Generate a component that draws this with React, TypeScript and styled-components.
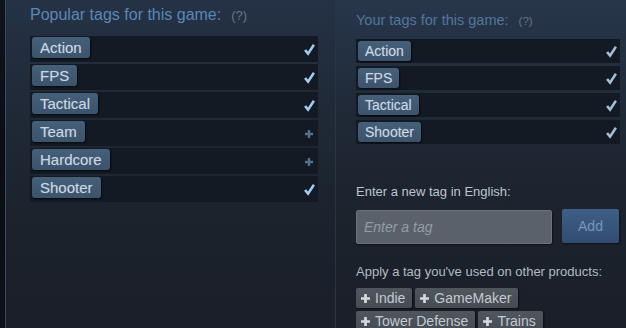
import React from "react";
import styled, { createGlobalStyle } from "styled-components";

const Global = createGlobalStyle`
  html, body { margin: 0; padding: 0; background: #0b0e13; }
  body { font-family: "Liberation Sans", Arial, sans-serif; }
`;

const Frame = styled.div`
  width: 626px;
  height: 328px;
  display: flex;
  overflow: hidden;
  background: #0b0e13;
`;

const Gutter = styled.div`
  flex: none;
  width: 5px;
  background: linear-gradient(180deg, #10141b 0%, #0a0d12 50%, #0d1016 100%);
`;

const Modal = styled.div`
  flex: 1;
  display: grid;
  grid-template-columns: 330px 1fr;
  border-left: 1px solid #364a61;
  background: linear-gradient(180deg, #253246 0%, #202a38 30%, #1c232d 65%, #1a1f28 100%);
`;

const LeftColumn = styled.section`
  padding: 5px 17px 0 24px;
  border-right: 1px solid #2a3543;
  display: flex;
  flex-direction: column;
`;

const RightColumn = styled.section`
  padding: 11px 6px 0 20px;
  display: flex;
  flex-direction: column;
  background: linear-gradient(180deg, rgba(60, 85, 115, 0.12) 0%, rgba(0, 0, 0, 0) 35%);
`;

const Title = styled.h2<{ $size: number; $line: number; $gap: number; $color: string }>`
  margin: 0 0 ${(p) => p.$gap}px 0;
  font-weight: normal;
  font-size: ${(p) => p.$size}px;
  line-height: ${(p) => p.$line}px;
  color: ${(p) => p.$color};
  white-space: nowrap;
`;

const Help = styled.span<{ $size: number }>`
  margin-left: 10px;
  font-size: ${(p) => p.$size}px;
  color: #66768a;
`;

const TagList = styled.div<{ $gap: number }>`
  display: flex;
  flex-direction: column;
  gap: ${(p) => p.$gap}px;
`;

const TagRow = styled.div<{ $height: number; $top: number }>`
  height: ${(p) => p.$height}px;
  box-sizing: border-box;
  padding: ${(p) => p.$top}px 3px 0 2px;
  display: flex;
  align-items: flex-start;
  justify-content: space-between;
  background: #141a23;
`;

const Tag = styled.span<{ $size: number; $height: number; $pad: number }>`
  height: ${(p) => p.$height}px;
  line-height: ${(p) => p.$height}px;
  padding: 0 ${(p) => p.$pad}px;
  border-radius: 3px;
  font-size: ${(p) => p.$size}px;
  color: #cad7e2;
  background: linear-gradient(180deg, #46607a 0%, #3b536b 100%);
  box-shadow: 1px 1px 2px rgba(0, 0, 0, 0.75);
  text-shadow: 0 0 1px rgba(200, 215, 226, 0.35);
  white-space: nowrap;
`;

const Mark = styled.span`
  align-self: center;
  display: flex;
  align-items: center;
  justify-content: center;
  width: 12px;
`;

const Label = styled.div<{ $top: number; $color: string }>`
  margin-top: ${(p) => p.$top}px;
  font-size: 13px;
  line-height: 16px;
  color: ${(p) => p.$color};
  white-space: nowrap;
`;

const EntryRow = styled.div`
  margin-top: 9px;
  display: flex;
  align-items: flex-start;
  gap: 10px;
`;

const TagInput = styled.input`
  box-sizing: border-box;
  width: 196px;
  height: 34px;
  margin-top: 1px;
  padding: 0 7px;
  border: 1px solid #6a727c;
  border-radius: 2px;
  background: #5a616b;
  font-family: "Liberation Sans", Arial, sans-serif;
  font-size: 14px;
  font-style: italic;
  color: #d0d6dc;
  outline: none;
  box-shadow: 1px 1px 2px rgba(0, 0, 0, 0.5);
  &::placeholder {
    color: #939ca6;
    font-style: italic;
  }
`;

const AddButton = styled.button`
  box-sizing: border-box;
  width: 57px;
  height: 34px;
  border: none;
  border-radius: 2px;
  background: linear-gradient(180deg, #3f5f86 0%, #314c70 100%);
  font-family: "Liberation Sans", Arial, sans-serif;
  font-size: 14px;
  color: #7897bc;
  box-shadow: 1px 1px 2px rgba(0, 0, 0, 0.5);
`;

const ChipWrap = styled.div`
  margin-top: 8px;
  display: flex;
  flex-wrap: wrap;
  gap: 3px 3px;
  width: 190px;
`;

const Chip = styled.span`
  height: 20px;
  display: inline-flex;
  align-items: center;
  gap: 5px;
  padding: 0 7px 0 5px;
  border-radius: 2px;
  background: linear-gradient(180deg, #50565e 0%, #464c54 100%);
  box-shadow: 1px 1px 2px rgba(0, 0, 0, 0.6);
  font-size: 14px;
  color: #c3c9cf;
  white-space: nowrap;
`;

const Check = ({ color }: { color: string }) => (
  <svg width="11" height="12" viewBox="0 0 10 11">
    <path d="M0 6.3 L1.9 4.7 L3.6 6.9 L8.1 0 L10 1.4 L3.8 10.8 Z" fill={color} />
  </svg>
);

const Plus = ({ color, size }: { color: string; size: number }) => (
  <svg width={size} height={size} viewBox="0 0 8 8">
    <path d="M2.8 0 H5.2 V2.8 H8 V5.2 H5.2 V8 H2.8 V5.2 H0 V2.8 H2.8 Z" fill={color} />
  </svg>
);

type PopularTag = { name: string; applied: boolean };

const popular: PopularTag[] = [
  { name: "Action", applied: true },
  { name: "FPS", applied: true },
  { name: "Tactical", applied: true },
  { name: "Team", applied: false },
  { name: "Hardcore", applied: false },
  { name: "Shooter", applied: true },
];

const mine = ["Action", "FPS", "Tactical", "Shooter"];
const used = ["Indie", "GameMaker", "Tower Defense", "Trains"];

export default function App() {
  return (
    <>
      <Global />
      <Frame>
        <Gutter />
        <Modal>
          <LeftColumn>
            <Title $size={16} $line={20} $gap={10} $color="#5a88b6">
              Popular tags for this game:<Help $size={13}>(?)</Help>
            </Title>
            <TagList $gap={2}>
              {popular.map((t) => (
                <TagRow key={t.name} $height={26} $top={1}>
                  <Tag $size={15} $height={21} $pad={8}>
                    {t.name}
                  </Tag>
                  <Mark>
                    {t.applied ? <Check color="#a3cdf2" /> : <Plus color="#52728f" size={8} />}
                  </Mark>
                </TagRow>
              ))}
            </TagList>
          </LeftColumn>
          <RightColumn>
            <Title $size={14.5} $line={18} $gap={9} $color="#52769c">
              Your tags for this game:<Help $size={11.5}>(?)</Help>
            </Title>
            <TagList $gap={3}>
              {mine.map((name) => (
                <TagRow key={name} $height={24} $top={2}>
                  <Tag $size={14} $height={20} $pad={7}>
                    {name}
                  </Tag>
                  <Mark>
                    <Check color="#a4bfd8" />
                  </Mark>
                </TagRow>
              ))}
            </TagList>
            <Label $top={40} $color="#bcc5ce">
              Enter a new tag in English:
            </Label>
            <EntryRow>
              <TagInput placeholder="Enter a tag" />
              <AddButton>Add</AddButton>
            </EntryRow>
            <Label $top={20} $color="#b2bbc4">
              Apply a tag you've used on other products:
            </Label>
            <ChipWrap>
              {used.map((name) => (
                <Chip key={name}>
                  <Plus color="#d4d9de" size={9} />
                  {name}
                </Chip>
              ))}
            </ChipWrap>
          </RightColumn>
        </Modal>
      </Frame>
    </>
  );
}
